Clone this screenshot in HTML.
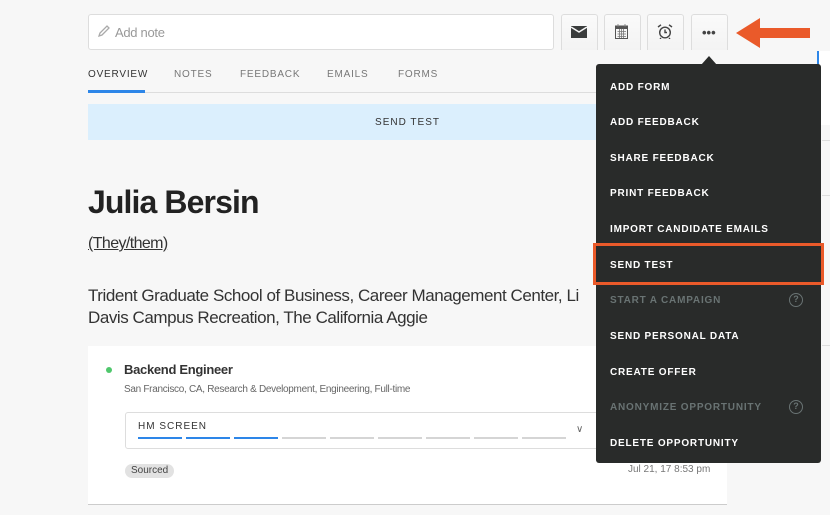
<!DOCTYPE html>
<html><head><meta charset="utf-8"><style>
*{margin:0;padding:0;box-sizing:border-box}
body{width:830px;height:515px;overflow:hidden;background:#f7f7f7;font-family:"Liberation Sans",sans-serif;position:relative;color:#2a2c2c}
.abs{position:absolute}
.note{left:88px;top:14px;width:466px;height:36px;background:#fff;border:1px solid #ddd;border-radius:3px;font-size:13px;color:#999;padding:10px 0 0 26px;letter-spacing:-0.3px}
.btn{top:14px;width:37px;height:36px;border:1px solid #ddd;border-bottom:none;border-radius:3px 3px 0 0;background:linear-gradient(#fafafa,#f3f3f3)}
.tab{top:69px;font-size:10px;letter-spacing:0.8px;color:#777}
.menu{left:596px;top:64px;width:225px;height:399px;background:#292b2a;border-radius:3px}
.mi{position:absolute;left:14px;font-size:10px;font-weight:bold;letter-spacing:0.8px;color:#fff}
.mi.d{color:#697373}
.q{position:absolute;left:193px;width:14px;height:14px;border:1.5px solid #697373;border-radius:50%;color:#697373;font-size:9px;text-align:center;line-height:11px;font-weight:bold}
.seg{position:absolute;top:24px;height:2px;width:44px;background:#d5d5d5}
</style></head><body>
<div class="abs note">Add note</div>
<svg class="abs" style="left:97px;top:25px" width="13" height="13" viewBox="0 0 13 13"><path d="M2 11 L3 8 L10 1 L12 3 L5 10 Z" fill="none" stroke="#aaa" stroke-width="1.3"/></svg>
<div class="abs btn" style="left:561px"></div>
<div class="abs btn" style="left:604px"></div>
<div class="abs btn" style="left:647px"></div>
<div class="abs btn" style="left:691px"></div>
<svg class="abs" style="left:571px;top:26px" width="16" height="12"><path d="M0 0H16V12H0Z" fill="#3a3c3c"/><path d="M0 1L8 6L16 1" fill="none" stroke="#f7f7f7" stroke-width="1.5"/></svg>
<svg class="abs" style="left:615px;top:24px" width="13" height="15"><rect x="0.5" y="2" width="12" height="12.5" fill="none" stroke="#555"/><rect x="0.5" y="2" width="12" height="3" fill="#555"/><path d="M3 0V3M10 0V3M2.5 7.5H11M2.5 10H11M2.5 12.5H11M4.5 5V14M6.5 5V14M8.5 5V14" stroke="#777" stroke-width="0.8"/></svg>
<svg class="abs" style="left:657px;top:24px" width="16" height="15"><circle cx="8" cy="8.5" r="5.3" fill="none" stroke="#444" stroke-width="1.4"/><path d="M8 5.5V8.5H10M1 3L4 0.8M15 3L12 0.8M4 14L3 15M12 14L13 15" stroke="#444" stroke-width="1.4" fill="none"/></svg>
<div class="abs" style="left:702px;top:25px;font-size:13px;color:#444;font-weight:bold">•••</div>
<svg class="abs" style="left:736px;top:17px" width="76" height="32"><path d="M0 16L24 1V11H74V21H24V31Z" fill="#ea5a2a"/></svg>

<div class="abs tab" style="left:88px;color:#333">OVERVIEW</div>
<div class="abs tab" style="left:174px">NOTES</div>
<div class="abs tab" style="left:240px">FEEDBACK</div>
<div class="abs tab" style="left:327px">EMAILS</div>
<div class="abs tab" style="left:398px">FORMS</div>
<div class="abs" style="left:88px;top:92px;width:639px;height:1px;background:#ddd"></div>
<div class="abs" style="left:88px;top:90px;width:57px;height:3px;background:#2d86e8"></div>
<div class="abs" style="left:88px;top:104px;width:639px;height:36px;background:#dbeffd;font-size:10px;letter-spacing:1px;color:#333;text-align:center;padding-top:13px">SEND TEST</div>

<div class="abs" style="left:88px;top:184px;font-size:32px;font-weight:bold;letter-spacing:-0.9px;color:#222">Julia Bersin</div>
<div class="abs" style="left:88px;top:235px;font-size:16px;text-decoration:underline;color:#333;letter-spacing:-0.6px">(They/them)</div>
<div class="abs" style="left:88px;top:285px;font-size:17px;line-height:22px;color:#333;letter-spacing:-0.45px;white-space:nowrap;width:520px;overflow:hidden">Trident Graduate School of Business, Career Management Center, Li<br>Davis Campus Recreation, The California Aggie</div>

<div class="abs" style="left:88px;top:346px;width:639px;height:159px;background:#fff;border-bottom:1px solid #ccc">
  <div class="abs" style="left:18px;top:21px;width:6px;height:6px;border-radius:50%;background:#4fc76c"></div>
  <div class="abs" style="left:36px;top:16px;font-size:13px;font-weight:bold;color:#333;letter-spacing:-0.3px">Backend Engineer</div>
  <div class="abs" style="left:36px;top:38px;font-size:10px;color:#666;letter-spacing:-0.3px">San Francisco, CA, Research &amp; Development, Engineering, Full-time</div>
  <div class="abs" style="left:37px;top:66px;width:490px;height:37px;border:1px solid #ddd;border-radius:3px">
    <div class="abs" style="left:12px;top:8px;font-size:10px;letter-spacing:1px;color:#333">HM SCREEN</div>
    <div class="seg" style="left:12px;background:#2d86e8"></div>
    <div class="seg" style="left:60px;background:#2d86e8"></div>
    <div class="seg" style="left:108px;background:#2d86e8"></div>
    <div class="seg" style="left:156px"></div>
    <div class="seg" style="left:204px"></div>
    <div class="seg" style="left:252px"></div>
    <div class="seg" style="left:300px"></div>
    <div class="seg" style="left:348px"></div>
    <div class="seg" style="left:396px"></div>
    <div class="abs" style="left:450px;top:11px;font-size:10px;color:#666">∨</div>
  </div>
  <div class="abs" style="left:37px;top:118px;height:14px;padding:0 6px;background:#e2e2e2;border-radius:7px;font-size:10px;color:#444;line-height:14px">Sourced</div>
  <div class="abs" style="left:540px;top:118px;font-size:10px;color:#777">Jul 21, 17 8:53 pm</div>
</div>

<div class="abs" style="left:817px;top:51px;width:13px;height:74px;background:#fff;border-left:2px solid #2d86e8"></div>
<div class="abs" style="left:822px;top:140px;width:8px;height:1px;background:#ddd"></div>
<div class="abs" style="left:822px;top:195px;width:8px;height:1px;background:#ddd"></div>
<div class="abs" style="left:822px;top:345px;width:8px;height:1px;background:#ddd"></div>

<svg class="abs" style="left:701px;top:56px" width="16" height="9"><path d="M0 9L8 0L16 9Z" fill="#292b2a"/></svg>
<div class="abs menu">
  <div class="mi" style="top:18px">ADD FORM</div>
  <div class="mi" style="top:53px">ADD FEEDBACK</div>
  <div class="mi" style="top:89px">SHARE FEEDBACK</div>
  <div class="mi" style="top:124px">PRINT FEEDBACK</div>
  <div class="mi" style="top:160px">IMPORT CANDIDATE EMAILS</div>
  <div class="mi" style="top:196px">SEND TEST</div>
  <div class="mi d" style="top:231px">START A CAMPAIGN</div><div class="q" style="top:229px">?</div>
  <div class="mi" style="top:267px">SEND PERSONAL DATA</div>
  <div class="mi" style="top:303px">CREATE OFFER</div>
  <div class="mi d" style="top:338px">ANONYMIZE OPPORTUNITY</div><div class="q" style="top:336px">?</div>
  <div class="mi" style="top:374px">DELETE OPPORTUNITY</div>
</div>
<div class="abs" style="left:593px;top:243px;width:231px;height:42px;border:3px solid #ea5a2a"></div>
</body></html>
